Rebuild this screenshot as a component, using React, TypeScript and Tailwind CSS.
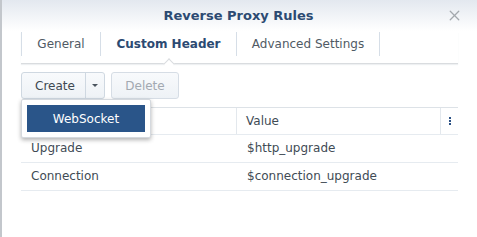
import { X } from "lucide-react";

const rows = [
  { name: "Upgrade", value: "$http_upgrade" },
  { name: "Connection", value: "$connection_upgrade" },
];

const tabs = [
  { label: "General", w: "w-[79px]" },
  { label: "Custom Header", w: "w-[136px]" },
  { label: "Advanced Settings", w: "w-[144px]" },
];

export default function App() {
  return (
    <div className="flex h-[237px] w-[477px] overflow-hidden bg-white font-['DejaVu_Sans',sans-serif] text-[12px] text-[#414b55]">
      <div className="w-[2px] shrink-0 bg-[#c3c7cc]" />
      <div className="relative flex flex-1 flex-col">
        {/* title bar */}
        <header className="relative flex h-[31px] shrink-0 items-center justify-center bg-gradient-to-b from-[#e3e8ef] to-white pr-[2px]">
          <span className="text-[13px] font-bold text-[#2c4a72]">Reverse Proxy Rules</span>
          <X className="absolute right-[14px] top-[7px] h-[17px] w-[17px] text-[#a3a8ad]" strokeWidth={1.8} />
        </header>

        <div className="flex flex-col pl-[19px] pr-[19px]">
          {/* tabs */}
          <div className="relative mt-[1px] flex border-b border-[#d9dcdf] pb-[7px] shadow-[0_1px_1px_#eef0f2]">
            {tabs.map((t, i) => (
              <div
                key={t.label}
                className={`relative flex h-[24px] ${t.w} items-center justify-center border-l border-[#d6dee7] ${
                  i === 2 ? "border-r" : ""
                } ${i === 1 ? "font-bold text-[#2c4a72]" : "text-[#505a64]"}`}
              >
                {t.label}
                {i === 1 && (
                  <span className="absolute bottom-[-12px] left-1/2 h-[8px] w-[8px] -translate-x-1/2 rotate-45 border-l border-t border-[#d9dcdf] bg-white" />
                )}
              </div>
            ))}
          </div>

          {/* toolbar */}
          <div className="mt-[8px] flex gap-[6px]">
            <div className="flex h-[27px] rounded-[3px] border border-[#cfd8e1] bg-gradient-to-b from-[#f8fafc] to-[#eef2f6]">
              <span className="flex w-[63px] items-center justify-center pl-[3px] text-[#3e4852]">Create</span>
              <span className="flex w-[19px] items-center justify-center border-l border-[#cfd8e1]">
                <span className="h-0 w-0 border-x-[3px] border-t-[3px] border-x-transparent border-t-[#4a545e]" />
              </span>
            </div>
            <div className="flex h-[27px] w-[68px] items-center justify-center rounded-[3px] border border-[#d6dde5] bg-gradient-to-b from-[#f8fafc] to-[#eef2f6] text-[#a2a9b1]">
              Delete
            </div>
          </div>

          {/* table */}
          <div className="mt-[8px] border-t border-[#dde2e7]">
            <div className="flex h-[27px] border-b border-[#e6ebf0]">
              <div className="w-[216px] border-r border-[#e3e8ed]" />
              <div className="flex flex-1 items-center border-r border-[#e3e8ed] pl-[9px]">Value</div>
              <div className="flex w-[17px] flex-col items-center justify-center gap-[1px]">
                <span className="h-[2px] w-[2px] bg-[#2b5185]" />
                <span className="h-[2px] w-[2px] bg-[#2b5185]" />
                <span className="h-[2px] w-[2px] bg-[#2b5185]" />
              </div>
            </div>
            {rows.map((r) => (
              <div key={r.name} className="flex h-[28px] items-center border-b border-[#e6ebf0] pb-[2px]">
                <div className="w-[216px] pl-[10px]">{r.name}</div>
                <div className="flex-1 pl-[10px]">{r.value}</div>
              </div>
            ))}
          </div>
        </div>

        {/* dropdown menu */}
        <div className="absolute left-[19px] top-[99px] w-[130px] rounded-[2px] border border-[#d5d9de] bg-white p-[5px] shadow-[0_2px_4px_rgba(0,0,0,0.3)]">
          <div className="flex h-[27px] items-center justify-center bg-[#2a5589] text-[12px] text-white">WebSocket</div>
        </div>
      </div>
    </div>
  );
}
